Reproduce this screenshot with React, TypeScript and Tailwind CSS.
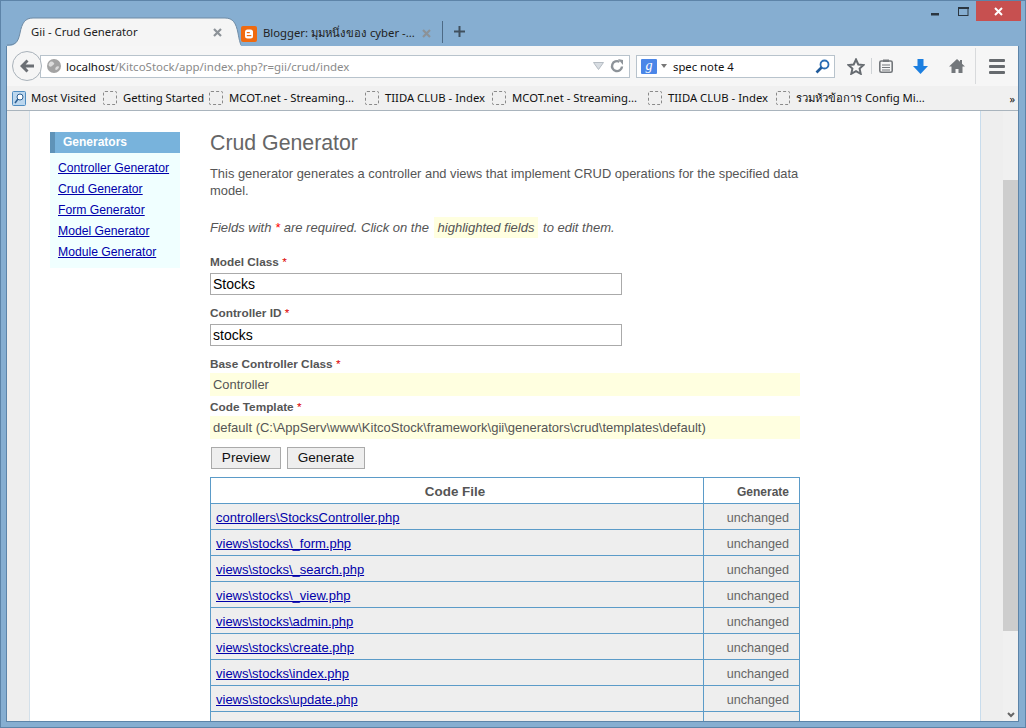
import React from "react";

const ui = "font-['Noto_Sans','Open_Sans',sans-serif]";
const files = [
  "controllers\\StocksController.php",
  "views\\stocks\\_form.php",
  "views\\stocks\\_search.php",
  "views\\stocks\\_view.php",
  "views\\stocks\\admin.php",
  "views\\stocks\\create.php",
  "views\\stocks\\index.php",
  "views\\stocks\\update.php",
  "views\\stocks\\view.php",
];
const gens = ["Controller Generator", "Crud Generator", "Form Generator", "Model Generator", "Module Generator"];
const marks: [string, string][] = [
  ["Getting Started", "w-[106px]"],
  ["MCOT.net - Streaming...", "w-[156px]"],
  ["TIIDA CLUB - Index", "w-[127px]"],
  ["MCOT.net - Streaming...", "w-[156px]"],
  ["TIIDA CLUB - Index", "w-[128px]"],
  ["รวมหัวข้อการ Config Mi...", "w-[160px]"],
];

function CloseX({ className = "" }: { className?: string }) {
  return (
    <svg width="9" height="9" viewBox="0 0 9 9" className={className}>
      <path d="M1 1l7 7M8 1l-7 7" stroke="#8c9298" strokeWidth="2.2" />
    </svg>
  );
}

function Dashed() {
  return <span className="w-[14px] h-[14px] shrink-0 rounded-[2px] border border-dashed border-[#8a8a8a]" />;
}

function Star() {
  return <span className="text-[#d00] font-normal">*</span>;
}

function TitleControls() {
  return (
    <div className="h-[20px] pr-[4px] flex justify-end items-start">
      <svg width="8" height="3" viewBox="0 0 8 3" className="mt-[12px] mr-[19px]">
        <rect width="8" height="2.5" fill="#2b3640" />
      </svg>
      <svg width="11" height="9" viewBox="0 0 11 9" className="mt-[6px] mr-[7px]">
        <rect x="0.5" y="1" width="9.5" height="7.5" fill="none" stroke="#2b3640" />
        <rect x="0" y="0" width="11" height="2" fill="#2b3640" />
      </svg>
      <div className="w-[45px] h-[20px] bg-[#c75050] flex items-center justify-center">
        <svg width="9" height="9" viewBox="0 0 9 9">
          <path d="M1 1l7 7M8 1l-7 7" stroke="#fff" strokeWidth="2" />
        </svg>
      </div>
    </div>
  );
}

function TabStrip() {
  return (
    <div className={`h-[25px] flex items-stretch text-[11.3px] text-[#222] ${ui}`}>
      <div className="relative w-[229px] h-[29px] -mt-[4px] pt-[2px] shrink-0 flex items-center pl-[24px] pr-[14px] z-10">
        <svg width="234" height="29" viewBox="0 0 234 29" className="absolute left-0 top-0">
          <path
            d="M0 29c8 0 11-3 13-13 2-10 5-15 13-15h192c8 0 11 5 13 15 2 10 3 13 3 13z"
            fill="#f5f5f5"
          />
          <path
            d="M0 28c8 0 11-2 13-12 2-10 5-15 13-15h192c8 0 11 5 13 15 1 6 2 10 3 12"
            fill="none"
            stroke="#6f8ba5"
          />
        </svg>
        <span className="relative flex-1">Gii - Crud Generator</span>
        <CloseX className="relative" />
      </div>
      <div className="w-[205px] flex items-center pl-[5px] pr-[10px] shrink-0">
        <svg width="16" height="16" viewBox="0 0 16 16" className="shrink-0">
          <rect width="16" height="16" rx="2" fill="#f06a0f" />
          <rect x="4" y="3.5" width="8" height="9" rx="2.5" fill="#fff" />
          <rect x="5.8" y="6" width="3" height="1.2" fill="#f06a0f" />
          <rect x="5.8" y="9" width="4.5" height="1.2" fill="#f06a0f" />
        </svg>
        <span className="ml-[6px] flex-1 whitespace-nowrap overflow-hidden">Blogger: มุมหนึ่งของ cyber -...</span>
        <CloseX />
      </div>
      <div className="w-px h-[22px] bg-[#4d6a85] ml-[1px]" />
      <svg width="11" height="11" viewBox="0 0 11 11" className="ml-[11px] mt-[5px]">
        <path d="M5.5 0v11M0 5.5h11" stroke="#40505e" strokeWidth="2" />
      </svg>
    </div>
  );
}

function NavBar() {
  return (
    <div className={`h-[40px] pl-[5px] bg-[#f6f6f6] flex items-center text-[11.5px] ${ui}`}>
      <div className="relative z-10 w-[30px] h-[30px] rounded-full bg-[#f5f5f5] border border-[#a9b2ba] flex items-center justify-center shrink-0">
        <svg width="16" height="14" viewBox="0 0 16 14">
          <path d="M7.5 0.5L1 7l6.5 6.5 2-2L6.6 8.6H15V5.4H6.6l2.9-2.9z" fill="#6b6f74" />
        </svg>
      </div>
      <div className="-ml-[2px] w-[590px] h-[23px] bg-white border border-[#b8c3cc] flex items-center pl-[6px] pr-[5px]">
        <svg width="14" height="14" viewBox="0 0 14 14" className="shrink-0">
          <circle cx="7" cy="7" r="7" fill="#a3a3a3" />
          <path d="M3 3c2-1 3 0 4 1s-1 2-2 3-2 1-3 0 0-3 1-4zM9 8c1-1 3-1 3 0s-2 3-3 3-1-2 0-3z" fill="#dcdcdc" />
        </svg>
        <span className="ml-[5px] mt-[2px] flex-1 whitespace-nowrap text-[#8a8a8a]">
          <span className="text-[#111]">localhost</span>/KitcoStock/app/index.php?r=gii/crud/index
        </span>
        <svg width="11" height="8" viewBox="0 0 11 8">
          <path d="M0.5 0.5h10L5.5 7.5z" fill="#d8dde2" stroke="#b5bcc3" />
        </svg>
        <svg width="14" height="14" viewBox="0 0 14 14" className="ml-[6px]">
          <path d="M12 7.5A5 5 0 1 1 9.5 2.8" fill="none" stroke="#8d9399" strokeWidth="2.4" />
          <path d="M8 0l5 1v5z" fill="#8d9399" />
        </svg>
      </div>
      <div className="ml-[6px] w-[199px] h-[23px] bg-white border border-[#b8c3cc] flex items-center pl-[4px] pr-[4px]">
        <span className="w-[16px] h-[15px] rounded-[1px] bg-[#4a86e8] text-white text-[14px] leading-[13px] text-center font-['Liberation_Serif',serif] italic shrink-0">
          g
        </span>
        <svg width="6" height="4" viewBox="0 0 6 4" className="ml-[4px]">
          <path d="M0 0h6L3 4z" fill="#777" />
        </svg>
        <span className="ml-[6px] mt-[2px] flex-1 text-[11.3px] text-[#111]">spec note 4</span>
        <svg width="15" height="15" viewBox="0 0 15 15">
          <circle cx="9.5" cy="5.5" r="4" fill="none" stroke="#2a6db5" strokeWidth="1.8" />
          <path d="M6.5 8.5L1.5 13.5" stroke="#1f5a9a" strokeWidth="2.6" />
        </svg>
      </div>
      <svg width="18" height="17" viewBox="0 0 18 17" className="ml-[12px]">
        <path
          d="M9 1.5l2.3 5 5.2.6-3.9 3.5 1.1 5.2L9 13.2l-4.7 2.6 1.1-5.2L1.5 7.1l5.2-.6z"
          fill="none"
          stroke="#666b70"
          strokeWidth="2"
        />
      </svg>
      <div className="ml-[6px] w-px h-[16px] bg-[#cfd3d6]" />
      <svg width="14" height="14" viewBox="0 0 14 14" className="ml-[7px]">
        <rect x="0.8" y="2" width="12.4" height="11.2" rx="1.5" fill="none" stroke="#73777b" strokeWidth="1.6" />
        <rect x="4" y="0.5" width="6" height="2.5" fill="#73777b" />
        <path d="M3 6h8M3 8.5h8M3 11h8" stroke="#73777b" />
      </svg>
      <svg width="15" height="15" viewBox="0 0 15 15" className="ml-[20px]">
        <path d="M4.5 0h6v7H15l-7.5 8L0 7h4.5z" fill="#1c7fe0" />
      </svg>
      <svg width="16" height="14" viewBox="0 0 16 14" className="ml-[21px]">
        <path d="M8 0L0 7.5h2.5V14h4v-4h3v4h4V7.5H16L13 4.7V1h-2v1.8z" fill="#73777b" />
      </svg>
      <div className="ml-[10px] w-px h-[36px] bg-[#d8dadc]" />
      <div className="ml-[13px] flex flex-col gap-[3px]">
        <span className="w-[16px] h-[3px] rounded-[1px] bg-[#666a6e]" />
        <span className="w-[16px] h-[3px] rounded-[1px] bg-[#666a6e]" />
        <span className="w-[16px] h-[3px] rounded-[1px] bg-[#666a6e]" />
      </div>
    </div>
  );
}

function Bookmarks() {
  return (
    <div className={`h-[25px] pl-[5px] pr-[3px] bg-[#f0f0f0] border-b border-[#a9b4bd] flex items-center text-[11.3px] text-[#111] whitespace-nowrap ${ui}`}>
      <svg width="14" height="15" viewBox="0 0 14 15" className="shrink-0">
        <rect x="0.5" y="0.5" width="13" height="14" rx="1" fill="#bcd7ee" stroke="#4f8cc0" />
        <circle cx="8" cy="6" r="3" fill="#fff" stroke="#2d5f92" />
        <path d="M6 8l-3 4" stroke="#2d5f92" strokeWidth="1.5" />
      </svg>
      <span className="ml-[5px] w-[72px]">Most Visited</span>
      {marks.map(([t, w], i) => (
        <span key={i} className={`flex items-center gap-[6px] overflow-hidden ${w}`}>
          <Dashed />
          {t}
        </span>
      ))}
      <span className="ml-auto text-[11px] leading-none">»</span>
    </div>
  );
}

function Sidebar() {
  return (
    <div className="w-[130px] shrink-0 self-start bg-[#f0ffff]">
      <div className="h-[21px] bg-[#78b3dc] border-l-[5px] border-[#5f93b8] pl-[8px] text-white font-bold text-[12px] leading-[21px]">
        Generators
      </div>
      <div className="pl-[8px] pb-[5px] pt-[5px]">
        {gens.map((g) => (
          <a key={g} href="#" className="block h-[21px] leading-[21px] text-[12.2px] text-[#00a] underline">
            {g}
          </a>
        ))}
      </div>
    </div>
  );
}

function Label({ children }: { children: React.ReactNode }) {
  return <div className="text-[11.8px] font-bold leading-[14px] text-[#555]">{children} <Star /></div>;
}

function Main() {
  return (
    <div className="w-[590px] shrink-0 text-[12.9px] text-[#555]">
      <h1 className="text-[21.3px] leading-[22px] text-[#666] font-normal">Crud Generator</h1>
      <p className="mt-[11px] leading-[17px]">
        This generator generates a controller and views that implement CRUD operations for the specified data model.
      </p>
      <p className="mt-[18px] h-[21px] leading-[21px] italic text-[13px]">
        Fields with <span className="text-[#f00]">*</span> are required. Click on the{" "}
        <span className="inline-block bg-[#ffffe0] px-[4px] mx-[1px]">highlighted fields</span> to edit them.
      </p>
      <div className="mt-[17px]">
        <Label>Model Class</Label>
        <div className="mt-[4px] w-[412px] h-[22px] border border-[#aaa] bg-white text-[14px] leading-[20px] pl-[2px] text-black">Stocks</div>
      </div>
      <div className="mt-[11px]">
        <Label>Controller ID</Label>
        <div className="mt-[4px] w-[412px] h-[22px] border border-[#aaa] bg-white text-[14px] leading-[20px] pl-[2px] text-black">stocks</div>
      </div>
      <div className="mt-[11px]">
        <Label>Base Controller Class</Label>
        <div className="mt-[2px] h-[23px] bg-[#ffffe0] pl-[3px] leading-[23px]">Controller</div>
      </div>
      <div className="mt-[4px]">
        <Label>Code Template</Label>
        <div className="mt-[2px] h-[23px] bg-[#ffffe0] pl-[3px] leading-[23px] whitespace-nowrap text-[13px]">
          {"default (C:\\AppServ\\www\\KitcoStock\\framework\\gii\\generators\\crud\\templates\\default)"}
        </div>
      </div>
      <div className="mt-[8px] ml-[1px] flex gap-[6px] text-[13.6px] text-[#111]">
        <button className="w-[70px] h-[22px] border border-[#aaa] bg-[#eee]">Preview</button>
        <button className="w-[78px] h-[22px] border border-[#aaa] bg-[#eee]">Generate</button>
      </div>
      <table className="mt-[8px] w-[590px] border-collapse table-fixed">
        <thead>
          <tr className="h-[26px] bg-white">
            <th className="border border-[#5b9bc8] text-center text-[13.4px] text-[#555] font-bold p-0 pr-[4px] pt-[4px]">Code File</th>
            <th className="w-[96px] border border-[#5b9bc8] text-right text-[12px] text-[#555] font-bold p-0 pr-[10px] pt-[2px]">Generate</th>
          </tr>
        </thead>
        <tbody>
          {files.map((f) => (
            <tr key={f} className="h-[26px] bg-[#eee]">
              <td className="border border-[#5b9bc8] p-0 pl-[5px] pt-[2px]">
                <a href="#" className="text-[13px] text-[#00a] underline">{f}</a>
              </td>
              <td className="border border-[#5b9bc8] p-0 pr-[10px] pt-[4px] text-right text-[12.6px] text-[#666]">unchanged</td>
            </tr>
          ))}
        </tbody>
      </table>
    </div>
  );
}

function Page() {
  return (
    <div className="flex-1 min-h-0 flex overflow-hidden bg-white font-['Liberation_Sans',Arial,sans-serif]">
      <div className="w-[23px] shrink-0 bg-[#eee] border-r border-[#d3e0ea]" />
      <div className="flex-1 min-w-0 pt-[21px] pl-[20px] flex gap-[30px]">
        <Sidebar />
        <Main />
      </div>
      <div className="w-[23px] shrink-0 bg-[#eee] border-l border-[#c8dcec]" />
      <div className="w-[15px] shrink-0 bg-[#f0f0f0] flex flex-col">
        <div className="h-[69px]" />
        <div className="h-[451px] bg-[#cdcdcd]" />
        <div className="flex-1 flex items-end justify-center pb-[3px]">
          <svg width="8" height="6" viewBox="0 0 8 6">
            <path d="M1 1l3 3 3-3" fill="none" stroke="#666" strokeWidth="2" />
          </svg>
        </div>
      </div>
    </div>
  );
}

export default function App() {
  return (
    <div className="w-[1026px] h-[728px] overflow-hidden bg-[#86aed1] border border-[#5d84a8] flex flex-col pb-[5px]">
      <TitleControls />
      <div className="pl-[5px] pr-[6px] flex-1 min-h-0 flex flex-col">
        <div className="pl-[1px]"><TabStrip /></div>
        <div className="flex-1 min-h-0 flex flex-col border-l border-r border-b border-[#5d84a8]">
          <NavBar />
          <Bookmarks />
          <Page />
        </div>
      </div>
    </div>
  );
}
